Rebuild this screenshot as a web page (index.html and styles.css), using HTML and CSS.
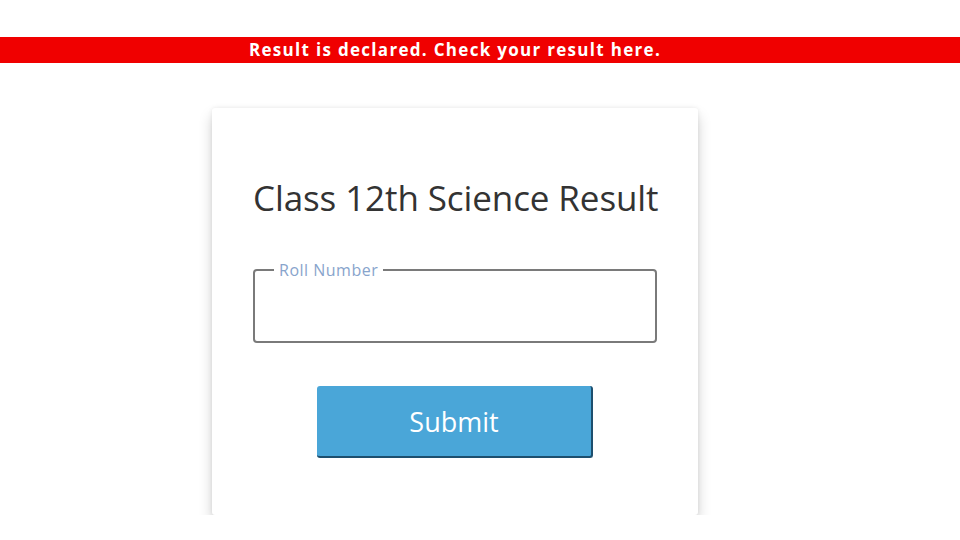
FILE: index.html
```html
<!DOCTYPE html>
<html lang="en">
<head>
    <meta charset="UTF-8">
    <meta name="viewport" content="width=device-width, initial-scale=1.0">
    <title>Class 12th Science Result</title>
    <link rel="stylesheet" href="styles.css">
</head>
<body>
    <!-- Notice bar -->
    <div class="notice">Result is declared. Check your result here.</div>

    <div class="page">
        <div class="card">
            <h2 class="card-title">Class 12th Science Result</h2>
            <fieldset class="field">
                <legend>Roll Number</legend>
                <input type="text" id="rollInput" />
            </fieldset>
            <button class="submit-button">Submit</button>
        </div>
    </div>
</body>
</html>
```

FILE: styles.css
```css
body {
    margin: 0;
    padding: 0;
    font-family: "Open Sans", Arial, sans-serif;
    background: #fff;
    color: #333;
}

.notice {
    margin-top: 37px;
    height: 26px;
    padding-right: 50px;
    line-height: 26px;
    background-color: #f00000;
    color: #fff;
    font-weight: bold;
    font-size: 17px;
    letter-spacing: 1.3px;
    text-align: center;
}

.page {
    padding: 45px 0 0 212px;
}

.card {
    width: 486px;
    box-sizing: border-box;
    padding: 65px 41px 57px;
    background: #fff;
    border-radius: 3px;
    box-shadow: 0 8px 14px rgba(0, 0, 0, 0.18), 0 0 4px rgba(0, 0, 0, 0.08);
    text-align: center;
}

.card-title {
    margin: 0;
    font-weight: normal;
    font-size: 35px;
    line-height: 50px;
    color: #333;
    letter-spacing: -0.1px;
    white-space: nowrap;
}

.field {
    margin: 36px 0 0;
    padding: 0 8px 6px;
    height: 84px;
    box-sizing: border-box;
    border: 2px solid #7a7a7a;
    border-radius: 4px;
    text-align: left;
}

.field legend {
    margin-left: 11px;
    padding: 0 5px;
    font-size: 16px;
    letter-spacing: 0.5px;
    color: #88a4cc;
}

.field input {
    width: 100%;
    height: 44px;
    border: none;
    outline: none;
    font-family: inherit;
    font-size: 16px;
}

.submit-button {
    margin-top: 43px;
    width: 276px;
    height: 72px;
    border: none;
    border-right: 2px solid #1d4f6e;
    border-bottom: 2px solid #1d4f6e;
    border-radius: 3px;
    background-color: #4aa6d8;
    color: #fff;
    font-family: inherit;
    font-size: 27px;
    cursor: pointer;
}

.submit-button:hover {
    background-color: #3b95c6;
}
```
